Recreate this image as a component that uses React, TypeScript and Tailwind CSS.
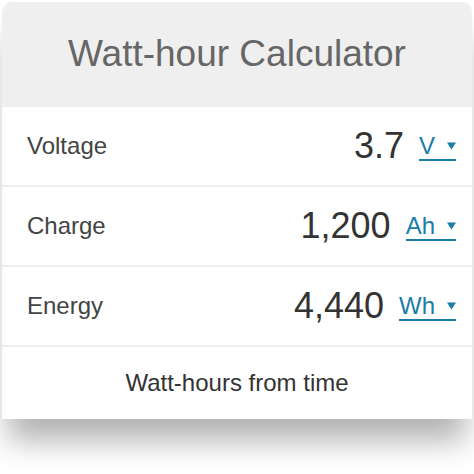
const rows = [
  { label: "Voltage", value: "3.7", unit: "V" },
  { label: "Charge", value: "1,200", unit: "Ah" },
  { label: "Energy", value: "4,440", unit: "Wh" },
];

function UnitSelect({ unit }: { unit: string }) {
  return (
    <span className="ml-[15px] mt-[2px] inline-flex items-center gap-[12px] border-b-2 border-[#1b7ca8] pb-[1px] text-[24px] leading-[24px] text-[#1b7ca8]">
      {unit}
      <svg width="9" height="8" viewBox="0 0 9 8" className="mt-[1px]">
        <path d="M0 0.5h9L4.5 7.5z" fill="#1b7ca8" />
      </svg>
    </span>
  );
}

export default function App() {
  return (
    <div
      className="w-[474px] h-[474px] bg-white pt-[2px] px-[2px] overflow-hidden"
      style={{ fontFamily: '"Liberation Sans", Arial, sans-serif' }}
    >
      <div className="rounded-t-[10px] bg-white shadow-[0_28px_30px_-6px_rgba(0,0,0,0.3)]">
        <div className="h-[105px] bg-[#efefef] rounded-t-[10px] flex items-center justify-center">
          <h1 className="text-[37px] text-[#666] pb-[2px]">Watt-hour Calculator</h1>
        </div>
        {rows.map((row) => (
          <div
            key={row.label}
            className="h-[80px] flex items-center pl-[25px] pr-[16px] border-b-2 border-[#eeeeee]"
          >
            <span className="text-[24px] text-[#444]">{row.label}</span>
            <span className="ml-auto text-[36px] text-[#333]">{row.value}</span>
            <UnitSelect unit={row.unit} />
          </div>
        ))}
        <div className="h-[72px] flex items-center justify-center">
          <span className="text-[24px] text-[#333]">Watt-hours from time</span>
        </div>
      </div>
    </div>
  );
}
